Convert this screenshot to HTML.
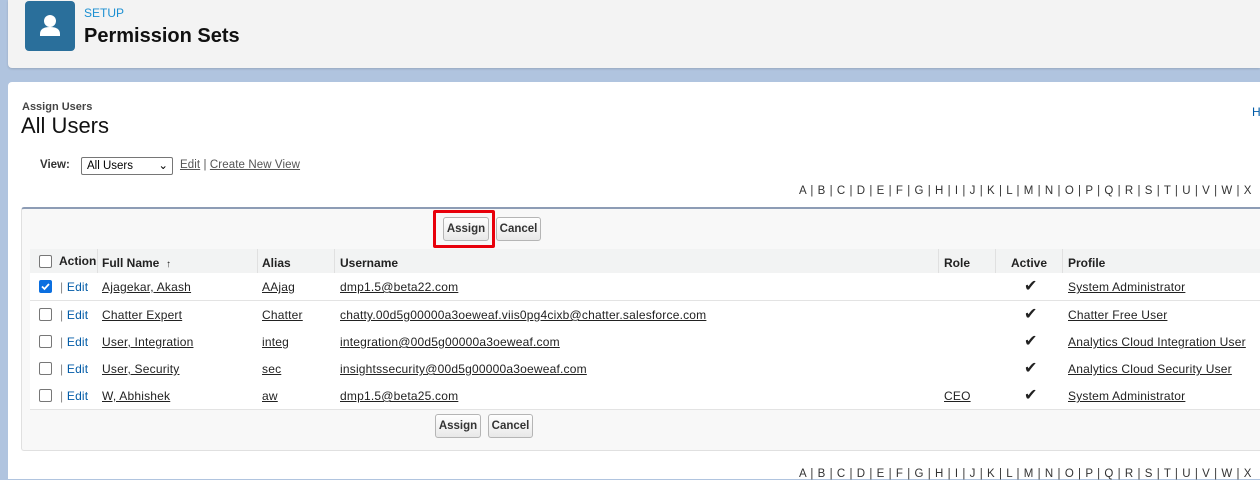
<!DOCTYPE html><html><head><style>
body{margin:0;width:1260px;height:479px;overflow:hidden;background:#b0c4df;font-family:"Liberation Sans",Arial,sans-serif;position:relative}
.a{position:absolute}
a,.u{color:#222;text-decoration:underline}
.hdr{left:8px;top:0;width:1252px;height:68px;background:#f3f3f3;border-radius:0 0 0 4px;box-shadow:0 1px 2px rgba(0,0,0,.15)}
.main{left:8px;top:82px;width:1252px;height:397px;background:#fff;border-radius:4px 0 0 0}
.btn{position:absolute;height:22px;border:1px solid #b5b5b5;border-radius:3px;background:linear-gradient(#fff,#e8e8e8);font-size:11.5px;font-weight:bold;color:#333;line-height:22px;text-align:center}
.row{position:absolute;left:30px;width:1230px;height:27px;background:#fff;border-bottom:1px solid #e3e3e3;font-size:12px;letter-spacing:.2px;color:#222}
.row span,.hrow span{position:absolute;top:7px}
.cb{position:absolute;left:9px;top:7px;width:11px;height:11px;border:1px solid #777;border-radius:2px;background:#fff}
.cb.on{background:#0b6fe0;border-color:#0b6fe0}
.hrow{position:absolute;left:30px;top:249px;width:1230px;height:24px;background:#f2f3f3;border-bottom:1px solid #e0e0e0;font-size:12px;font-weight:bold;color:#222}
.sep{position:absolute;top:0;width:1px;height:24px;background:#e0e0e0}
.ed{color:#015ba7;text-decoration:none}
.alpha{font-size:11.5px;color:#333;word-spacing:1.1px;white-space:nowrap;overflow:hidden;width:461px}
</style></head><body>
<div class="a hdr">
<div class="a" style="left:17px;top:1px;width:50px;height:50px;background:#2a6f9b;border-radius:4px">
<svg width="50" height="50" viewBox="0 0 50 50"><circle cx="25" cy="20" r="6" fill="#fff"/><path d="M15 33c0-5 4-7 10-7s10 2 10 7v2H15z" fill="#fff"/></svg></div>
<div class="a" style="left:76px;top:6px;font-size:12px;color:#1b8fd2">SETUP</div>
<div class="a" style="left:76px;top:25px;font-size:20px;font-weight:bold;color:#111">Permission Sets</div>
</div>
<div class="a main"></div>
<div class="a" style="left:22px;top:101px;font-size:11px;font-weight:bold;color:#444">Assign Users</div>
<div class="a" style="left:21px;top:113px;font-size:22px;color:#111">All Users</div>
<div class="a" style="left:1252px;top:105px;font-size:12px;color:#015ba7">H</div>
<div class="a" style="left:40px;top:159px;font-size:11.5px;font-weight:bold;color:#333">View:</div>
<div class="a" style="left:81px;top:157px;height:16px;border:1px solid #767676;border-radius:2px;font-size:11.5px;line-height:16px;padding-left:5px;width:85px">All Users<span style="position:absolute;right:4px;top:0">⌄</span></div>
<div class="a" style="left:180px;top:159px;font-size:11.5px;color:#555;letter-spacing:.1px"><span class="u" style="color:#555">Edit</span> | <span class="u" style="color:#555">Create New View</span></div>
<div class="a alpha" style="left:799px;top:185px">A | B | C | D | E | F | G | H | I | J | K | L | M | N | O | P | Q | R | S | T | U | V | W | X</div>
<div class="a" style="left:21px;top:207px;width:1239px;height:241px;background:#f8f8f8;border-top:2px solid #8d9cb5;border-left:1px solid #e0e0e0;border-bottom:1px solid #e0e0e0;border-radius:3px 0 0 3px"></div>
<div class="btn" style="left:443px;top:217px;width:44px">Assign</div>
<div class="a" style="left:433px;top:210px;width:56px;height:32px;border:3px solid #e8000b;border-radius:2px"></div>
<div class="btn" style="left:496px;top:217px;width:43px">Cancel</div>
<div class="hrow"><div class="cb" style="top:6px"></div><span style="left:29px;top:5px">Action</span>
<div class="sep" style="left:67px"></div><span style="left:72px">Full Name &nbsp;<span style="position:static;font-weight:normal;font-size:10px">↑</span></span>
<div class="sep" style="left:227px"></div><span style="left:232px">Alias</span>
<div class="sep" style="left:304px"></div><span style="left:310px">Username</span>
<div class="sep" style="left:908px"></div><span style="left:914px">Role</span>
<div class="sep" style="left:965px"></div><span style="left:981px">Active</span>
<div class="sep" style="left:1032px"></div><span style="left:1038px">Profile</span></div>

<div class="row" style="top:273px"><div class="cb on"><svg width="11" height="11" viewBox="0 0 11 11" style="position:absolute;top:0;left:0"><path d="M2 5.5l2.5 2.5L9 3" stroke="#fff" stroke-width="1.8" fill="none"/></svg></div><span style="left:30px;color:#888">| <span class="ed" style="position:static">Edit</span></span><span class="u" style="left:72px">Ajagekar, Akash</span><span class="u" style="left:232px">AAjag</span><span class="u" style="left:310px">dmp1.5@beta22.com</span><span style="left:994px;top:3px;font-size:16px">✔</span><span class="u" style="left:1038px">System Administrator</span></div>
<div class="row" style="top:301px"><div class="cb"></div><span style="left:30px;color:#888">| <span class="ed" style="position:static">Edit</span></span><span class="u" style="left:72px">Chatter Expert</span><span class="u" style="left:232px">Chatter</span><span class="u" style="left:310px">chatty.00d5g00000a3oeweaf.viis0pg4cixb@chatter.salesforce.com</span><span style="left:994px;top:3px;font-size:16px">✔</span><span class="u" style="left:1038px">Chatter Free User</span></div>
<div class="row" style="top:328px"><div class="cb"></div><span style="left:30px;color:#888">| <span class="ed" style="position:static">Edit</span></span><span class="u" style="left:72px">User, Integration</span><span class="u" style="left:232px">integ</span><span class="u" style="left:310px">integration@00d5g00000a3oeweaf.com</span><span style="left:994px;top:3px;font-size:16px">✔</span><span class="u" style="left:1038px">Analytics Cloud Integration User</span></div>
<div class="row" style="top:355px"><div class="cb"></div><span style="left:30px;color:#888">| <span class="ed" style="position:static">Edit</span></span><span class="u" style="left:72px">User, Security</span><span class="u" style="left:232px">sec</span><span class="u" style="left:310px">insightssecurity@00d5g00000a3oeweaf.com</span><span style="left:994px;top:3px;font-size:16px">✔</span><span class="u" style="left:1038px">Analytics Cloud Security User</span></div>
<div class="row" style="top:382px"><div class="cb"></div><span style="left:30px;color:#888">| <span class="ed" style="position:static">Edit</span></span><span class="u" style="left:72px">W, Abhishek</span><span class="u" style="left:232px">aw</span><span class="u" style="left:310px">dmp1.5@beta25.com</span><span class="u" style="left:914px">CEO</span><span style="left:994px;top:3px;font-size:16px">✔</span><span class="u" style="left:1038px">System Administrator</span></div>
<div class="btn" style="left:435px;top:414px;width:44px">Assign</div>
<div class="btn" style="left:488px;top:414px;width:43px">Cancel</div>
<div class="a alpha" style="left:799px;top:468px">A | B | C | D | E | F | G | H | I | J | K | L | M | N | O | P | Q | R | S | T | U | V | W | X</div>
</body></html>
